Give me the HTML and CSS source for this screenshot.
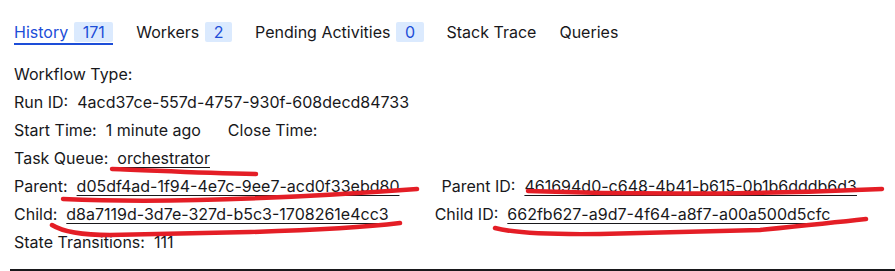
FILE: index.html
```html
<!DOCTYPE html>
<html>
<head>
<meta charset="utf-8">
<link rel="stylesheet" href="styles.css">
</head>
<body>
<div class="page">
  <nav class="tabs">
    <div class="tab active"><span>History</span><span class="badge">171</span></div>
    <div class="tab"><span>Workers</span><span class="badge">2</span></div>
    <div class="tab"><span>Pending Activities</span><span class="badge">0</span></div>
    <div class="tab"><span>Stack Trace</span></div>
    <div class="tab"><span>Queries</span></div>
  </nav>
  <section class="details">
    <div class="row"><span class="label">Workflow Type:</span></div>
    <div class="row"><span class="label">Run ID:</span><span class="value">4acd37ce-557d-4757-930f-608decd84733</span></div>
    <div class="row"><div class="pair"><span class="label">Start Time:</span><span class="value">1 minute ago</span></div><div class="pair pair-close"><span class="label">Close Time:</span></div></div>
    <div class="row"><span class="label">Task Queue:</span><a class="value link">orchestrator</a></div>
    <div class="row"><div class="pair"><span class="label">Parent:</span><a class="value link">d05df4ad-1f94-4e7c-9ee7-acd0f33ebd80</a></div><div class="pair pair-parent-id"><span class="label">Parent ID:</span><a class="value link">461694d0-c648-4b41-b615-0b1b6dddb6d3</a></div></div>
    <div class="row"><div class="pair"><span class="label">Child:</span><a class="value link">d8a7119d-3d7e-327d-b5c3-1708261e4cc3</a></div><div class="pair pair-child-id"><span class="label">Child ID:</span><a class="value link">662fb627-a9d7-4f64-a8f7-a00a500d5cfc</a></div></div>
    <div class="row"><span class="label">State Transitions:</span><span class="value">111</span></div>
  </section>
  <hr class="rule">
  <svg class="marks" width="895" height="271" viewBox="0 0 895 271" aria-hidden="true">
    <path d="M112 169 C150 170 190 173 256 174"/>
    <path d="M63 199 Q200 205 417 189"/>
    <path d="M52 225 Q68 235 110 235 L250 232 Q350 229 400 223"/>
    <path d="M528 191 Q700 197 882 189"/>
    <path d="M495 228 Q520 235 600 234 L760 230 Q830 223 866 219"/>
  </svg>
</div>
</body>
</html>
```
FILE: styles.css
```css
html, body {
  margin: 0;
  padding: 0;
  background: #ffffff;
}
body {
  font-family: "Inter", "Liberation Sans", sans-serif;
  font-size: 16px;
  color: #18181b;
}
.page {
  position: relative;
  width: 895px;
  height: 271px;
  overflow: hidden;
}
.tabs {
  display: flex;
  gap: 23px;
  padding: 22px 0 0 14px;
}
.tab {
  display: flex;
  align-items: center;
  gap: 6px;
  height: 20px;
  padding-bottom: 1px;
  border-bottom: 2px solid transparent;
  color: #18181b;
}
.tab.active {
  color: #1d4ed8;
  border-bottom-color: #1d4ed8;
}
.badge {
  background: #dbeafe;
  color: #1d4ed8;
  height: 20px;
  line-height: 20px;
  padding: 0 8.5px;
  border-radius: 2px;
}
.details {
  padding: 15px 0 0 14px;
}
.row {
  display: flex;
  align-items: center;
  height: 28px;
  white-space: nowrap;
}
.pair {
  display: flex;
}
.pair-close {
  margin-left: 27px;
}
.pair-parent-id {
  margin-left: 42px;
}
.pair-child-id {
  margin-left: 46px;
}
.value {
  margin-left: 9px;
}
.link {
  color: #18181b;
  text-decoration: underline;
  text-underline-offset: 3px;
  text-decoration-thickness: 1px;
}
.rule {
  margin: 13px 0 0 10px;
  border: 0;
  border-top: 2px solid #18181b;
}
.marks {
  position: absolute;
  top: 0;
  left: 0;
  pointer-events: none;
}
.marks path {
  fill: none;
  stroke: #e41e26;
  stroke-width: 4.5;
  stroke-linecap: round;
  stroke-linejoin: round;
}
```
